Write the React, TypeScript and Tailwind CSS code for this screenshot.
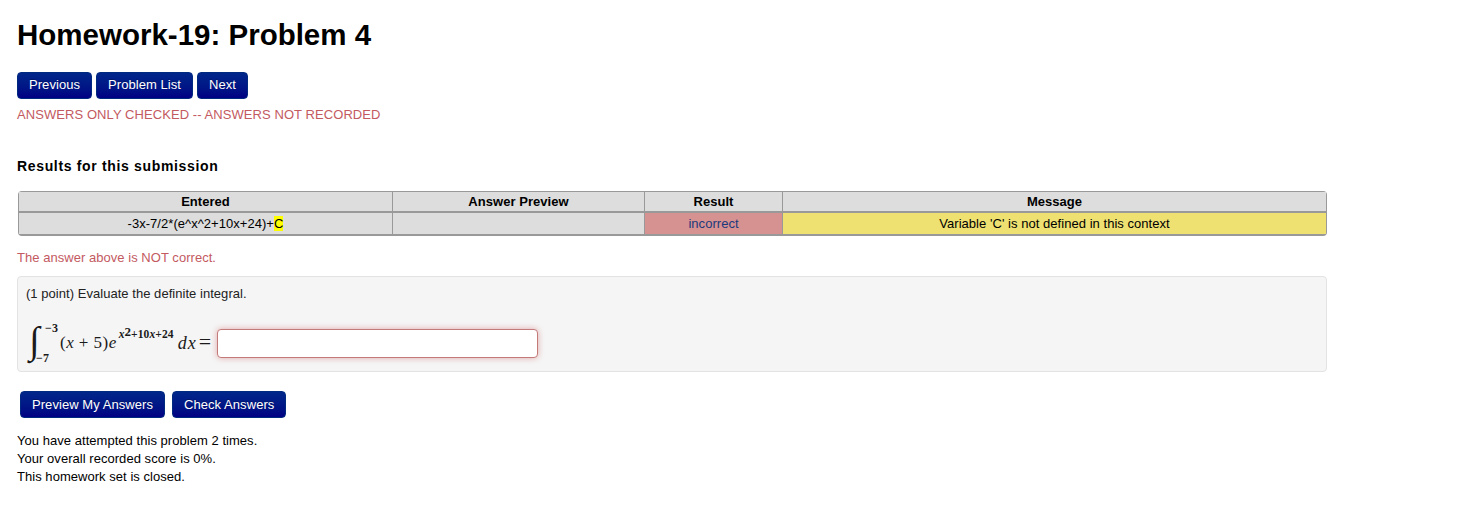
const navButton = "h-[27px] rounded-[4px] border border-[#002a80] bg-gradient-to-b from-[#00268a] to-[#000083] px-[11px] pb-[1px] text-[13px] tracking-[0.06px] leading-[24px] text-white [text-shadow:0_-1px_0_rgba(0,0,0,0.25)]"
const formButton = "h-[27px] rounded-[4px] border border-[#002a80] bg-gradient-to-b from-[#00268a] to-[#000083] px-[11px] text-[13px] tracking-[0.06px] leading-[25px] text-white [text-shadow:0_-1px_0_rgba(0,0,0,0.25)]"

function Integral() {
    return (
        <div className="flex h-[44px] w-[191px] items-start text-[#1a1a1a]" style={{ fontFamily: '"Liberation Serif", serif' }}>
            <div className="relative h-[44px] w-[33px] shrink-0">
                <span className="absolute left-[3px] top-[-10px] text-[38px] leading-[50px]">∫</span>
                <span className="absolute left-[19px] top-[-3px] text-[12px] font-bold leading-[12px]">−3</span>
                <span className="absolute left-[10px] top-[27px] text-[12px] font-bold leading-[12px]">−7</span>
            </div>
            <span className="ml-[1px] mt-[8px] shrink-0 text-[17px] leading-[20px] tracking-[0.45px]">(<i>x</i> + 5)<i>e</i></span>
            <span className="ml-[2px] mt-[3px] shrink-0 text-[11.5px] font-bold leading-[12px] tracking-[0.1px]"><i>x</i><span className="relative top-[-2px] text-[13px]">2</span>+10<i>x</i>+24</span>
            <span className="ml-[4px] mt-[8px] shrink-0 text-[18px] leading-[20px] tracking-[1px]"><i>dx</i></span>
            <span className="ml-[2px] mt-[7px] shrink-0 text-[22px] leading-[20px]">=</span>
        </div>
    )
}

function App() {
    return (
        <div className="h-[515px] w-[1462px] bg-white pl-[17px] text-[13px] tracking-[0.04px] text-[#000]" style={{ fontFamily: '"Liberation Sans", Arial, sans-serif' }}>
            <h1 className="pt-[17px] text-[29.5px] font-bold leading-[36px] tracking-normal">Homework-19: Problem 4</h1>
            <div className="mt-[19px] flex gap-[4px]">
                <button className={navButton}>Previous</button>
                <button className={navButton}>Problem List</button>
                <button className={navButton}>Next</button>
            </div>
            <div className="mt-[7px] leading-[18px] tracking-[0.07px] text-[#c35a5f]">ANSWERS ONLY CHECKED -- ANSWERS NOT RECORDED</div>
            <h2 className="mt-[33px] text-[14px] font-bold leading-[18px] tracking-[0.66px]">Results for this submission</h2>

            <table className="mt-[16px] ml-[1px] w-[1309px] table-fixed border-separate border-spacing-0 rounded-[4px] border border-b-2 border-[#999] text-center leading-[19px]">
                <colgroup>
                    <col className="w-[374px]" />
                    <col className="w-[252px]" />
                    <col className="w-[138px]" />
                    <col />
                </colgroup>
                <thead>
                    <tr className="bg-[#dddddd] font-bold">
                        <th className="h-[21px] border-r border-b-2 border-[#999] p-0">Entered</th>
                        <th className="border-r border-b-2 border-[#999] p-0">Answer Preview</th>
                        <th className="border-r border-b-2 border-[#999] p-0">Result</th>
                        <th className="border-b-2 border-[#999] p-0">Message</th>
                    </tr>
                </thead>
                <tbody>
                    <tr>
                        <td className="h-[21px] border-r border-[#999] bg-[#dddddd] p-0">-3x-7/2*(e^x^2+10x+24)+<span className="bg-[#ffff00]">C</span></td>
                        <td className="border-r border-[#999] bg-[#dddddd] p-0"></td>
                        <td className="border-r border-[#999] bg-[#d69191] p-0 text-[#1a3a7c]">incorrect</td>
                        <td className="bg-[#eee172] p-0">Variable 'C' is not defined in this context</td>
                    </tr>
                </tbody>
            </table>

            <div className="mt-[12px] leading-[20px] text-[#c35a5f]">The answer above is NOT correct.</div>

            <div className="mt-[8px] h-[96px] w-[1310px] rounded-[4px] border border-[#e3e3e3] bg-[#f5f5f5] pl-[8px] pt-[8px]">
                <p className="leading-[18px] text-[#222]">(1 point) Evaluate the definite integral.</p>
                <div className="mt-[22px] flex items-start">
                    <Integral />
                    <input className="mt-[4px] h-[29px] w-[321px] rounded-[4px] border border-[#c47a7a] bg-white shadow-[0_0_6px_#e0a8a8] outline-none" />
                </div>
            </div>

            <div className="ml-[3px] mt-[19px] flex gap-[7px]">
                <button className={formButton}>Preview My Answers</button>
                <button className={formButton}>Check Answers</button>
            </div>
            <div className="mt-[14px] leading-[18px]">
                <div>You have attempted this problem 2 times.</div>
                <div>Your overall recorded score is 0%.</div>
                <div>This homework set is closed.</div>
            </div>
        </div>
    )
}

export default App;
